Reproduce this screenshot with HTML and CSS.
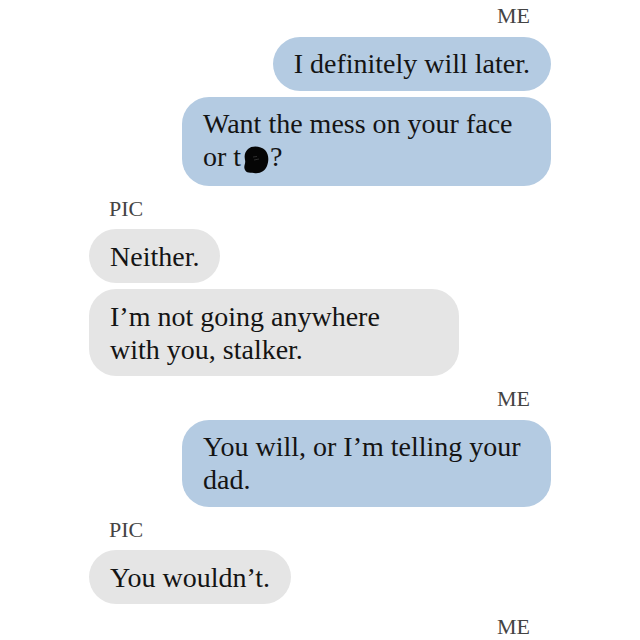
FILE: index.html
```html
<!DOCTYPE html>
<html lang="en">
<head>
<meta charset="utf-8">
<title>Chat</title>
<link rel="stylesheet" href="styles.css">
</head>
<body>
<main class="chat">
  <section class="group me">
    <div class="label">ME</div>
    <div class="bubble">I definitely will later.</div>
    <div class="bubble wide">Want the mess on your face<br>or t<span class="redact"><svg width="28" height="30" viewBox="0 0 28 30"><path d="M6 4 C10 0 19 1 23 5 C27 9 27 16 25 21 C23 26 18 29 12 28 C8 27 5 29 3 25 C1 21 4 19 3 15 C2 10 3 7 6 4 Z" fill="#050505"/><path d="M11 12 L15 11.5 M12 15 L17 14" stroke="#3a3a3a" stroke-width="0.8"/></svg></span>?</div>
  </section>
  <section class="group pic">
    <div class="label">PIC</div>
    <div class="bubble">Neither.</div>
    <div class="bubble wide">I’m not going anywhere<br>with you, stalker.</div>
  </section>
  <section class="group me">
    <div class="label">ME</div>
    <div class="bubble wide">You will, or I’m telling your<br>dad.</div>
  </section>
  <section class="group pic">
    <div class="label">PIC</div>
    <div class="bubble">You wouldn’t.</div>
  </section>
  <section class="group me">
    <div class="label">ME</div>
  </section>
</main>
</body>
</html>
```

FILE: styles.css
```css
html, body {
  margin: 0;
  padding: 0;
  background: #ffffff;
}

body {
  width: 640px;
  height: 640px;
  overflow: hidden;
  font-family: "Liberation Serif", "Times New Roman", serif;
  color: #141414;
}

.chat {
  display: flex;
  flex-direction: column;
  gap: 11px;
  padding: 4px 89px 0 89px;
}

.group {
  display: flex;
  flex-direction: column;
  gap: 6px;
}

.group.me {
  align-items: flex-end;
}

.group.pic {
  align-items: flex-start;
}

.label {
  font-size: 22px;
  line-height: 24px;
  color: #444444;
  margin-bottom: 2.5px;
}

.me .label {
  padding-right: 21px;
}

.pic .label {
  padding-left: 20px;
}

.bubble {
  font-size: 28px;
  line-height: 33px;
  padding: 10.5px 21px;
  border-radius: 27px;
  box-sizing: border-box;
}

.me .bubble {
  background: #b4cbe2;
}

.pic .bubble {
  background: #e5e5e5;
}

.bubble.wide {
  width: 370px;
}

.me .bubble.wide {
  width: 369px;
}

.redact {
  display: inline-block;
  width: 28px;
  height: 30px;
  vertical-align: -9px;
  margin-left: 1px;
}

.redact svg {
  display: block;
}
```
